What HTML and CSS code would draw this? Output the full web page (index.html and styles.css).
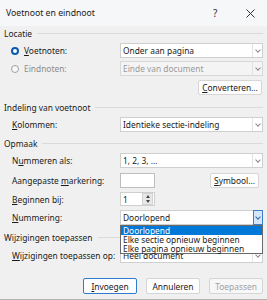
FILE: index.html
```html
<!DOCTYPE html>
<html lang="nl">
<head>
    <meta charset="UTF-8">
    <meta name="viewport" content="width=device-width, initial-scale=1.0">
    <title>Voetnoot en eindnoot</title>
    <link rel="stylesheet" href="styles.css">
</head>
<body>
    <div class="dialog">
        <div class="titlebar">
            <span class="title">Voetnoot en eindnoot</span>
            <span class="help">?</span>
            <span class="close">
                <svg width="9" height="9" viewBox="0 0 9 9"><path d="M0.5 0.5 L8.5 8.5 M8.5 0.5 L0.5 8.5" stroke="#333" stroke-width="1"/></svg>
            </span>
        </div>

        <div class="content">
            <div class="group-title">Locatie</div>
            <div class="row row-1">
                <label class="label radio-label"><span class="radio checked"></span><span><u>V</u>oetnoten:</span></label>
                <div class="combo"><span class="value">Onder aan pagina</span><span class="arrow"></span></div>
            </div>
            <div class="row row-2">
                <label class="label radio-label disabled"><span class="radio"></span><span>Eindnoten:</span></label>
                <div class="combo disabled"><span class="value">Einde van document</span><span class="arrow"></span></div>
            </div>
            <div class="row-right row-3">
                <button class="btn btn-conv"><u>C</u>onverteren...</button>
            </div>

            <div class="group-title gt-2">Indeling van voetnoot</div>
            <div class="row row-4">
                <label class="label"><u>K</u>olommen:</label>
                <div class="combo"><span class="value">Identieke sectie-indeling</span><span class="arrow"></span></div>
            </div>

            <div class="group-title gt-3">Opmaak</div>
            <div class="row row-5">
                <label class="label">N<u>u</u>mmeren als:</label>
                <div class="combo"><span class="value">1, 2, 3, ...</span><span class="arrow"></span></div>
            </div>
            <div class="row row-6">
                <label class="label">Aangepaste <u>m</u>arkering:</label>
                <div class="mark-wrap">
                    <div class="textbox"></div>
                    <button class="btn btn-sym"><u>S</u>ymbool...</button>
                </div>
            </div>
            <div class="row row-7">
                <label class="label"><u>B</u>eginnen bij:</label>
                <div class="spin">
                    <span class="value">1</span>
                    <span class="spin-btns">
                        <span class="up"></span>
                        <span class="down"></span>
                    </span>
                </div>
            </div>
            <div class="row row-8 open">
                <label class="label"><u>N</u>ummering:</label>
                <div class="combo focused"><span class="value">Doorlopend</span><span class="arrow"></span>
                    <ul class="list">
                        <li class="sel">Doorlopend</li>
                        <li>Elke sectie opnieuw beginnen</li>
                        <li>Elke pagina opnieuw beginnen</li>
                    </ul>
                </div>
            </div>

            <div class="group-title gt-4">Wijzigingen toepassen</div>
            <div class="row row-9">
                <label class="label"><u>W</u>ijzigingen toepassen op:</label>
                <div class="combo"><span class="value">Heel document</span><span class="arrow"></span></div>
            </div>

            <div class="buttons">
                <button class="btn btn-main default"><u>I</u>nvoegen</button>
                <button class="btn btn-main">Annuleren</button>
                <button class="btn btn-main disabled">Toepassen</button>
            </div>
        </div>
    </div>
</body>
</html>
```

FILE: styles.css
```css
body, html {
    margin: 0;
    padding: 0;
    background-color: #f0f0f0;
    font-family: "Noto Sans", "Open Sans", sans-serif;
    font-size: 8.4px;
    color: #1a1a1a;
}
.dialog {
    width: 267px;
    height: 300px;
    box-sizing: border-box;
    background-color: #f0f0f0;
    border-bottom: 1px solid #b4b4b4;
    overflow: hidden;
}
.titlebar {
    height: 26px;
    background-color: #f6f7f9;
    display: flex;
    align-items: center;
    padding-left: 6px;
    font-size: 8.7px;
}
.title {
    flex: 1;
}
.help {
    width: 8px;
    font-size: 10px;
    margin-right: 25px;
    color: #333;
}
.close {
    width: 9px;
    margin-right: 12px;
    display: flex;
}
.content {
    padding: 0 4px;
}
.group-title {
    display: flex;
    align-items: center;
    height: 11px;
    margin-top: 2px;
    gap: 5px;
}
.group-title::after {
    content: "";
    flex: 1;
    height: 1px;
    background-color: #dadada;
}
.gt-2 { margin-top: 7px; }
.gt-3 { margin-top: 6px; }
.gt-4 { margin-top: 7px; }
.row {
    display: flex;
    align-items: center;
    height: 15px;
    margin-top: 4px;
}
.row-2 { margin-top: 3px; }
.row-6 { margin-top: 5px; }
.row-7 { margin-top: 4px; height: 14px; }
.row-8 { margin-top: 4px; }
.row-9 { margin-top: 5px; }
.label {
    width: 116px;
    padding-left: 8px;
    box-sizing: border-box;
    white-space: nowrap;
}
.radio-label {
    display: flex;
    align-items: center;
    padding-left: 7px;
    gap: 5px;
}
.radio-label.disabled {
    color: #8c8c8c;
}
.radio {
    width: 8px;
    height: 8px;
    border-radius: 50%;
    border: 1px solid #a0a0a0;
    background-color: #f8f8f8;
    box-sizing: border-box;
}
.radio.checked {
    border: 2.5px solid #0a5bb0;
    background-color: #fff;
}
.combo {
    position: relative;
    width: 143px;
    height: 15px;
    box-sizing: border-box;
    border: 1px solid #cfcfcf;
    background-color: #fff;
    display: flex;
    align-items: center;
}
.combo .value {
    flex: 1;
    padding-left: 2px;
    white-space: nowrap;
}
.combo .arrow {
    width: 10px;
    height: 13px;
    box-sizing: border-box;
    border-left: 1px solid #e3e3e3;
    display: flex;
    align-items: center;
    justify-content: center;
}
.combo .arrow::before {
    content: "";
    width: 3px;
    height: 3px;
    border-right: 1px solid #8a8a8a;
    border-bottom: 1px solid #8a8a8a;
    transform: rotate(45deg);
    margin-top: -2px;
}
.combo.disabled {
    background-color: #f4f4f4;
    color: #9a9a9a;
    border-color: #d8d8d8;
}
.combo.focused .arrow {
    border: 1px solid #3c7fc9;
    background-color: #d5e7f8;
    height: 15px;
    margin-right: -1px;
}
.combo.focused .arrow::before {
    border-color: #2f6cb0;
}
.row-right {
    display: flex;
    justify-content: flex-end;
    margin-top: 4px;
    height: 15px;
    padding-right: 1px;
}
.btn {
    font-family: inherit;
    font-size: inherit;
    color: #1a1a1a;
    background-color: #fdfdfd;
    border: 1px solid #d6d6d6;
    border-radius: 2px;
    padding: 0;
    height: 15px;
    box-sizing: border-box;
}
.btn-conv {
    width: 64px;
}
.mark-wrap {
    display: flex;
    align-items: center;
    width: 143px;
}
.textbox {
    width: 35px;
    height: 15px;
    box-sizing: border-box;
    border: 1px solid #bdbdbd;
    background-color: #fff;
}
.btn-sym {
    width: 49px;
    margin-left: 55px;
}
.spin {
    width: 35px;
    height: 14px;
    box-sizing: border-box;
    border: 1px solid #cfcfcf;
    background-color: #fff;
    display: flex;
    align-items: center;
}
.spin .value {
    flex: 1;
    padding-left: 2px;
}
.spin-btns {
    width: 11px;
    height: 12px;
    margin-right: 1px;
    background-color: #e8e8e8;
    border: 1px solid #d2d2d2;
    box-sizing: border-box;
    display: flex;
    flex-direction: column;
    align-items: center;
    justify-content: space-evenly;
}
.spin-btns .up {
    width: 0;
    height: 0;
    border-left: 2.5px solid transparent;
    border-right: 2.5px solid transparent;
    border-bottom: 3px solid #444;
}
.spin-btns .down {
    width: 0;
    height: 0;
    border-left: 2.5px solid transparent;
    border-right: 2.5px solid transparent;
    border-top: 3px solid #444;
}
.list {
    position: absolute;
    top: 14px;
    left: -1px;
    width: 143px;
    margin: 0;
    padding: 0;
    list-style: none;
    background-color: #fff;
    border: 1px solid #6a6a6a;
    box-sizing: border-box;
    z-index: 10;
}
.list li {
    height: 9px;
    line-height: 9px;
    padding-left: 2px;
    white-space: nowrap;
}
.list li.sel {
    background-color: #0078d7;
    color: #fff;
}
.buttons {
    display: flex;
    justify-content: flex-end;
    gap: 9px;
    margin-top: 15px;
}
.btn-main {
    width: 54px;
    height: 16px;
}
.btn-main.default {
    border-color: #2f7bd0;
}
.btn-main.disabled {
    color: #a0a0a0;
    background-color: #f7f7f7;
}
```
